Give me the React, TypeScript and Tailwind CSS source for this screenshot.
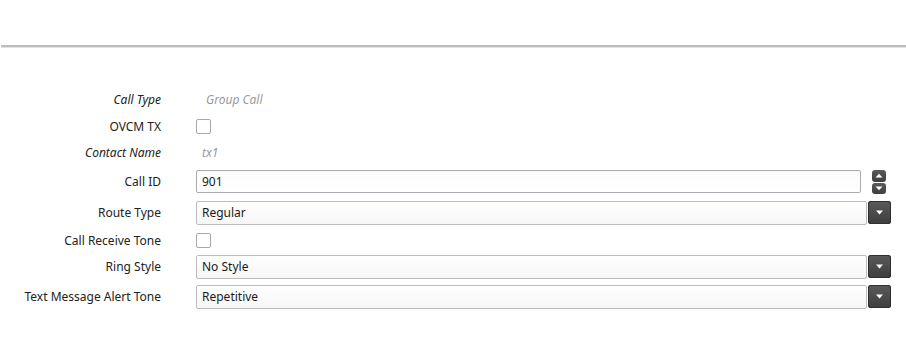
import React from "react";

const font = { fontFamily: '"Noto Sans", "Open Sans", sans-serif' };

function Label({ children, italic }: { children: React.ReactNode; italic?: boolean }) {
  return (
    <div
      className={`w-[162px] shrink-0 pr-[1px] text-right text-[12px] text-[#222] ${italic ? "italic" : ""}`}
    >
      {children}
    </div>
  );
}

function Checkbox() {
  return <div className="h-[15px] w-[15px] rounded-[2px] border border-[#a8a8a8] bg-white" />;
}

function DropButton() {
  return (
    <div className="ml-[1px] flex h-[23px] w-[23px] shrink-0 items-center justify-center rounded-[3px] bg-gradient-to-b from-[#5a5a5a] to-[#3e3e3e] shadow-[0_0_0_1px_#2f2f2f_inset]">
      <svg width="7" height="5" viewBox="0 0 7 5">
        <path d="M0 0.5h7L3.5 4.5z" fill="#fff" />
      </svg>
    </div>
  );
}

function Select({ value }: { value: string }) {
  return (
    <div className="flex w-[695px] items-center">
      <div className="flex h-[24px] flex-1 items-center rounded-[2px] border border-[#bcbcbc] bg-gradient-to-b from-white to-[#f6f6f6] px-[5px] text-[12px] text-[#1a1a1a]">
        {value}
      </div>
      <DropButton />
    </div>
  );
}

function Spinner() {
  return (
    <div className="ml-[11px] flex flex-col gap-[1px]">
      <div className="flex h-[12px] w-[14px] items-center justify-center rounded-[3px] bg-gradient-to-b from-[#5a5a5a] to-[#3e3e3e]">
        <svg width="8" height="5" viewBox="0 0 8 5">
          <path d="M0.5 4.5L4 0.8L7.5 4.5z" fill="#fff" />
        </svg>
      </div>
      <div className="flex h-[11px] w-[14px] items-center justify-center rounded-[3px] bg-gradient-to-b from-[#5a5a5a] to-[#3e3e3e]">
        <svg width="8" height="5" viewBox="0 0 8 5">
          <path d="M0.5 0.5L4 4.2L7.5 0.5z" fill="#fff" />
        </svg>
      </div>
    </div>
  );
}

export default function App() {
  return (
    <div className="h-[346px] w-[906px] bg-white" style={font}>
      <div className="h-[45px]" />
      <div className="ml-[1px] h-[2px] bg-[#bdbdbd]" />
      <div className="ml-[1px] h-[1px] bg-[#e4e4e4]" />

      <div className="mt-[40px] flex flex-col">
        {/* Call Type */}
        <div className="flex h-[23px] items-center">
          <Label italic>Call Type</Label>
          <div className="ml-[44px] text-[12px] italic text-[#9a9a9a]">Group Call</div>
        </div>

        {/* OVCM TX */}
        <div className="mt-[4px] flex h-[23px] items-center">
          <Label>OVCM TX</Label>
          <div className="ml-[34px]">
            <Checkbox />
          </div>
        </div>

        {/* Contact Name */}
        <div className="mt-[3px] flex h-[23px] items-center">
          <Label italic>Contact Name</Label>
          <div className="ml-[40px] text-[12px] italic text-[#9a9a9a]">tx1</div>
        </div>

        {/* Call ID */}
        <div className="mt-[6px] flex h-[23px] items-center">
          <Label>Call ID</Label>
          <div className="ml-[34px] flex items-center">
            <div className="flex h-[23px] w-[665px] items-center rounded-[2px] border border-[#a9abb0] bg-gradient-to-b from-[#fbfbfb] to-white px-[5px] text-[12px] text-[#1a1a1a]">
              901
            </div>
            <Spinner />
          </div>
        </div>

        {/* Route Type */}
        <div className="mt-[8px] flex h-[23px] items-center">
          <Label>Route Type</Label>
          <div className="ml-[34px]">
            <Select value="Regular" />
          </div>
        </div>

        {/* Call Receive Tone */}
        <div className="mt-[5px] flex h-[23px] items-center">
          <Label>Call Receive Tone</Label>
          <div className="ml-[34px]">
            <Checkbox />
          </div>
        </div>

        {/* Ring Style */}
        <div className="mt-[3px] flex h-[23px] items-center">
          <Label>Ring Style</Label>
          <div className="ml-[34px]">
            <Select value="No Style" />
          </div>
        </div>

        {/* Text Message Alert Tone */}
        <div className="mt-[7px] flex h-[23px] items-center">
          <Label>Text Message Alert Tone</Label>
          <div className="ml-[34px]">
            <Select value="Repetitive" />
          </div>
        </div>
      </div>
    </div>
  );
}
